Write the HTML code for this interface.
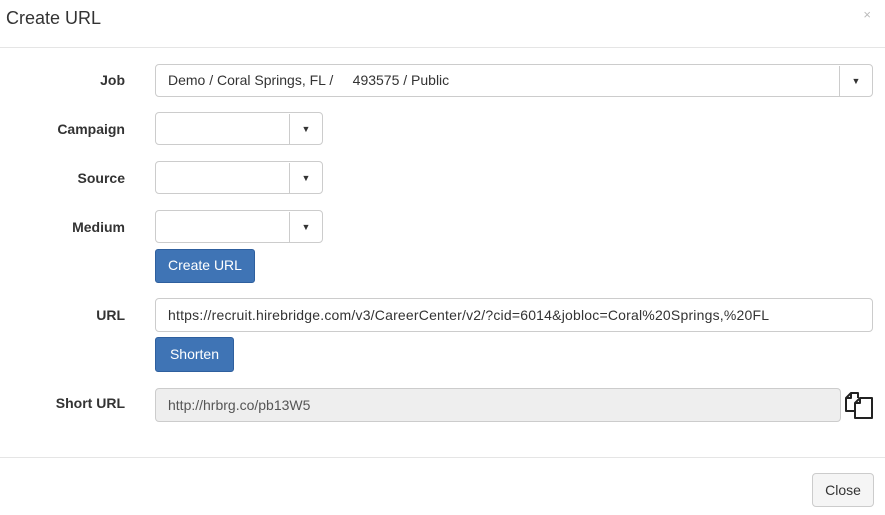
<!DOCTYPE html>
<html><head><style>
body{margin:0;width:885px;height:515px;background:#fff;font-family:"Liberation Sans",sans-serif;color:#333;position:relative;overflow:hidden}
.a{position:absolute}
.t{left:6px;top:8px;font-size:18px;color:#333}
.x{right:14px;top:7px;font-size:13px;color:#bbb}
.hr{left:0;width:885px;height:1px;background:#e5e5e5}
.lbl{width:125px;left:0;text-align:right;font-size:14px;font-weight:bold;color:#333}
.box{border:1px solid #ccc;border-radius:4px;box-sizing:border-box;background:#fff;font-size:14px;line-height:31px;padding-left:12px}
.arr{position:absolute;right:0;top:1px;bottom:0;width:32px;border-left:1px solid #ccc;text-align:center;font-size:9px;color:#333}
.btn{background:#3f74b5;border:1px solid #2e5f9e;border-radius:3px;color:#fff;font-size:14px;box-sizing:border-box;text-align:center;line-height:31px}
</style></head><body>
<div class="a t">Create URL</div>
<div class="a x">×</div>
<div class="a hr" style="top:47px"></div>
<div class="a lbl" style="top:72px">Job</div>
<div class="a box" style="left:155px;top:64px;width:718px;height:33px">Demo / Coral Springs, FL / &nbsp;&nbsp;&nbsp; 493575 / Public<div class="arr">▼</div></div>
<div class="a lbl" style="top:121px">Campaign</div>
<div class="a box" style="left:155px;top:112px;width:168px;height:33px"><div class="arr">▼</div></div>
<div class="a lbl" style="top:170px">Source</div>
<div class="a box" style="left:155px;top:161px;width:168px;height:33px"><div class="arr">▼</div></div>
<div class="a lbl" style="top:219px">Medium</div>
<div class="a box" style="left:155px;top:210px;width:168px;height:33px"><div class="arr">▼</div></div>
<div class="a btn" style="left:155px;top:249px;width:100px;height:34px">Create URL</div>
<div class="a lbl" style="top:307px">URL</div>
<div class="a box" style="left:155px;top:298px;width:718px;height:34px;line-height:32px;letter-spacing:0.2px">https://recruit.hirebridge.com/v3/CareerCenter/v2/?cid=6014&amp;jobloc=Coral%20Springs,%20FL</div>
<div class="a btn" style="left:155px;top:337px;width:79px;height:35px;line-height:33px">Shorten</div>
<div class="a lbl" style="top:395px">Short URL</div>
<div class="a box" style="left:155px;top:388px;width:686px;height:34px;line-height:32px;background:#eee;color:#555">http://hrbrg.co/pb13W5</div>
<svg class="a" style="left:845px;top:391px" width="29" height="29" viewBox="0 0 29 29" fill="none" stroke="#222" stroke-width="2" stroke-linejoin="round"><path d="M10 20H1V7L6 2H13V7"/><path d="M6 2V7H1"/><path d="M10 27V12L15 7H27V27Z" fill="#fff"/><path d="M15 7V12H10"/></svg>
<div class="a hr" style="top:457px"></div>
<div class="a box" style="left:812px;top:473px;width:62px;height:34px;line-height:32px;padding:0;text-align:center;background:#f5f5f5;color:#333">Close</div>
</body></html>
